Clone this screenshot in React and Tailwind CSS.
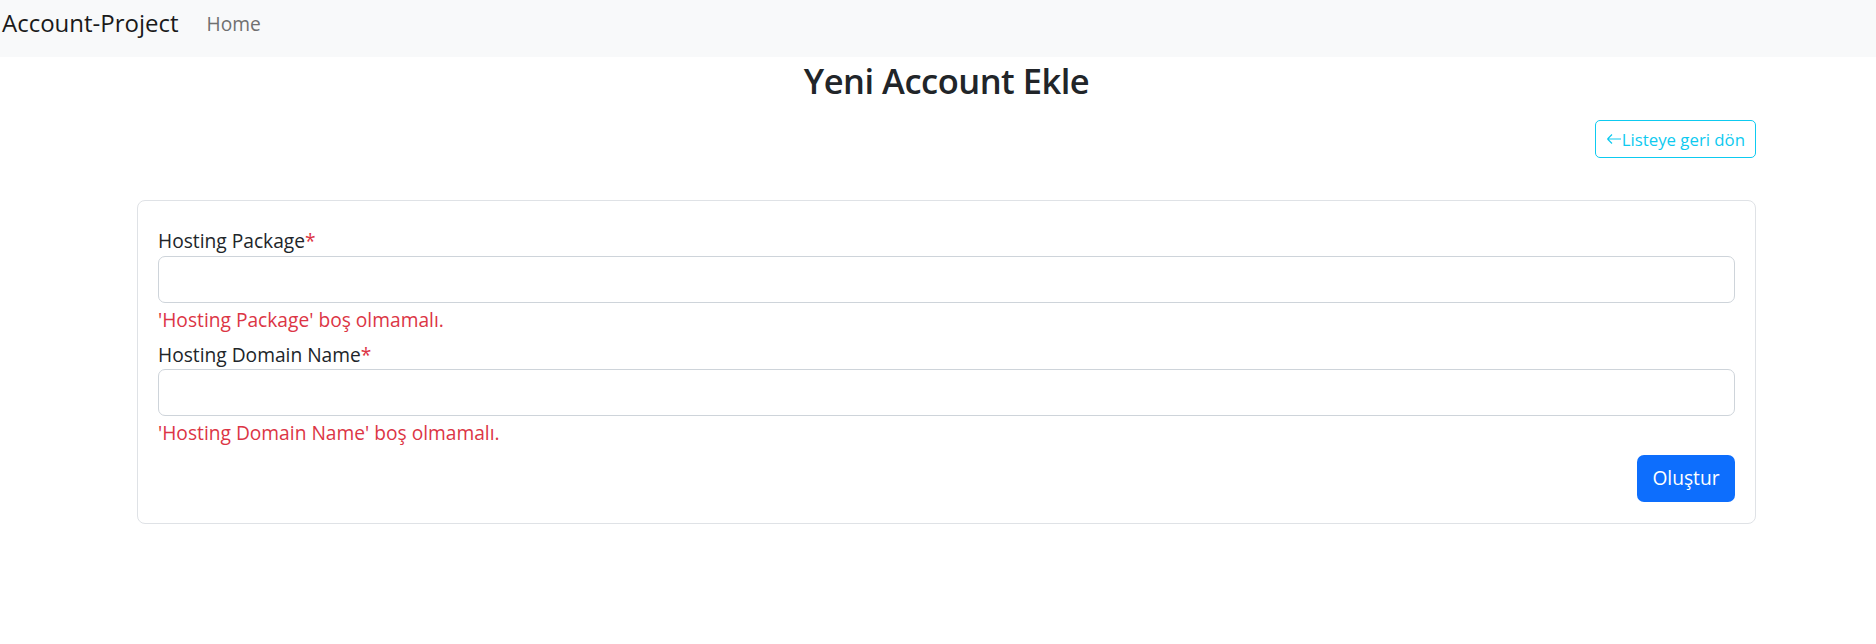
const fields = [
  { id: "hostingPackage", label: "Hosting Package", error: "'Hosting Package' boş olmamalı." },
  { id: "hostingDomainName", label: "Hosting Domain Name", error: "'Hosting Domain Name' boş olmamalı." },
];

const ArrowLeft = () => (
  <svg width="16" height="16" viewBox="0 0 16 16" fill="none" className="shrink-0">
    <path d="M15 8H1.5M1.5 8L6 3.5M1.5 8L6 12.5" stroke="#0dcaf0" strokeWidth="1.2" />
  </svg>
);

export default function App() {
  return (
    <div className="min-h-screen bg-white text-[#212529] font-['Open_Sans',sans-serif]">
      {/* Navbar */}
      <nav className="h-[57px] bg-[#f8f9fa] flex items-start">
        <a className="pl-[2px] pt-[5px] text-[24px] leading-[36px] text-[#1a1a1a]">Account-Project</a>
        <a className="ml-[28px] pt-[10px] text-[19.2px] leading-[28.8px] text-[#707070]">Home</a>
      </nav>

      <div className="ml-[137px] w-[1619px]">
        <h2 className="text-center text-[34.5px] leading-[44px] pt-[2px] font-semibold tracking-[-0.5px]">
          Yeni Account Ekle
        </h2>

        <div className="flex justify-end mt-[17px]">
          <button className="h-[38px] flex items-center px-[10px] border-[1.2px] border-[#0dcaf0] rounded-[5px] text-[#0dcaf0] text-[16.8px] leading-[25px]">
            <ArrowLeft />
            Listeye geri dön
          </button>
        </div>

        {/* Form card */}
        <div className="mt-[42px] border border-[#dfe2e6] rounded-[8px] px-[20px] pt-[26px] pb-[21px]">
          {fields.map((f) => (
            <div key={f.id} className="mb-[6px]">
              <label htmlFor={f.id} className="block text-[19.2px] leading-[28.8px]">
                {f.label}
                <span className="text-[#dc3545]">*</span>
              </label>
              <input
                id={f.id}
                className="block w-full h-[47px] border border-[#ced4da] rounded-[7px] bg-white px-[14px] text-[19.2px] outline-none"
              />
              <div className="mt-[3px] text-[19.2px] leading-[28.8px] text-[#dc3545]">{f.error}</div>
            </div>
          ))}
          <div className="flex justify-end mt-[7px]">
            <button className="h-[47px] w-[98px] bg-[#0d6efd] text-white text-[19.2px] rounded-[7px]">
              Oluştur
            </button>
          </div>
        </div>
      </div>
    </div>
  );
}
